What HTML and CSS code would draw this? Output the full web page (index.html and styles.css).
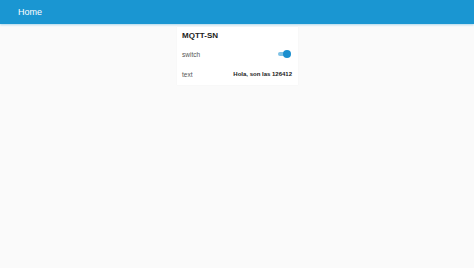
FILE: index.html
```html
<!DOCTYPE html>
<html>
<head>
<meta charset="utf-8">
<link rel="stylesheet" href="styles.css">
</head>
<body>
<header class="toolbar"><span class="title">Home</span></header>
<main class="content">
  <section class="card">
    <div class="card-header">MQTT-SN</div>
    <div class="row">
      <span class="label">switch</span>
      <span class="toggle"><span class="track"></span><span class="knob"></span></span>
    </div>
    <div class="row">
      <span class="label">text</span>
      <span class="value">Hola, son las 126412</span>
    </div>
  </section>
</main>
</body>
</html>
```
FILE: styles.css
```css
html, body {
  margin: 0;
  padding: 0;
  height: 100%;
}
body {
  background: #fafafa;
  font-family: "Liberation Sans", Arial, sans-serif;
  color: #212121;
}
.toolbar {
  height: 24px;
  background: #1a96d2;
  display: flex;
  align-items: center;
  padding-left: 18px;
  box-shadow: 0 1px 2px rgba(26, 150, 210, 0.35);
}
.title {
  color: #ffffff;
  font-size: 9px;
}
.content {
  display: flex;
  justify-content: center;
  padding-top: 3px;
}
.card {
  width: 121px;
  background: #ffffff;
  box-shadow: 0 0 1px rgba(0, 0, 0, 0.06);
  padding: 0 6px 1px 5px;
  box-sizing: border-box;
  margin-left: 1px;
}
.card-header {
  font-size: 8px;
  font-weight: bold;
  height: 16px;
  margin-bottom: 1px;
  display: flex;
  align-items: center;
}
.row {
  height: 20px;
  display: flex;
  align-items: center;
  justify-content: space-between;
}
.label {
  font-size: 6.5px;
  color: #555;
}
.value {
  font-size: 6px;
  font-weight: bold;
}
.toggle {
  position: relative;
  width: 13px;
  height: 8px;
  margin-right: 1px;
}
.track {
  position: absolute;
  left: 0;
  top: 2px;
  width: 12px;
  height: 4px;
  border-radius: 2px;
  background: #7fc2e6;
}
.knob {
  position: absolute;
  right: 0;
  top: 0;
  width: 8px;
  height: 8px;
  border-radius: 50%;
  background: #1a8fcf;
}
```
